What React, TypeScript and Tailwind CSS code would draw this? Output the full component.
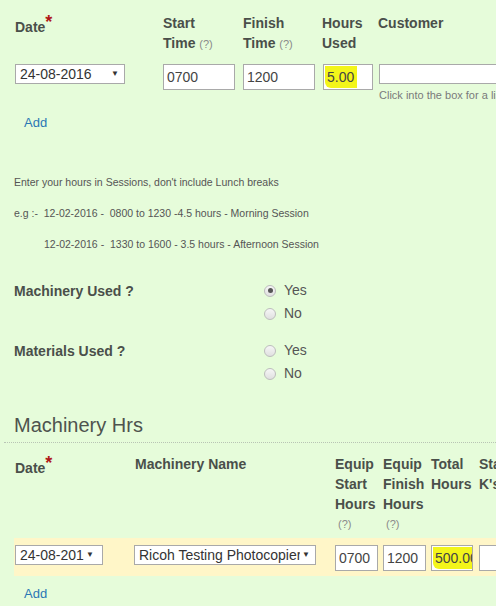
import React from "react";

const label = "text-[14px] font-bold leading-5 text-[#4a4f4a]";
const hint = "text-[11px] font-normal text-[#8a8a8a]";

function Select({ value, className, textW }: { value: string; className: string; textW?: string }) {
  return (
    <div
      className={`flex h-[20px] items-center overflow-hidden border border-[#a9a9a9] bg-white pl-[4px] pr-[5px] text-[14px] text-[#333] ${className}`}
    >
      <span className={`min-w-0 flex-1 overflow-hidden whitespace-nowrap ${textW ?? ""}`}>{value}</span>
      <span className="ml-[2px] shrink-0 text-[8px] text-[#333]">▼</span>
    </div>
  );
}

function Box({ value, className, mark }: { value?: string; className: string; mark?: boolean }) {
  return (
    <div
      className={`flex items-center overflow-hidden border border-[#a9a9a9] bg-white pl-[3px] text-[14px] text-[#444] ${className}`}
    >
      {mark ? (
        <span className="-ml-[2px] rounded-bl-[6px] bg-[#f3f51a] pl-[2px] pr-[3px] leading-[22px] whitespace-nowrap">{value}</span>
      ) : (
        <span className="whitespace-nowrap">{value}</span>
      )}
    </div>
  );
}

function Radio({ checked, text }: { checked?: boolean; text: string }) {
  return (
    <div className="flex h-[23px] items-center gap-[8px]">
      <span className="flex h-[12px] w-[12px] items-center justify-center rounded-full border border-[#bdbdbd] bg-gradient-to-b from-[#f6f6f6] to-[#e0e0e0]">
        {checked && <span className="h-[5px] w-[5px] rounded-full bg-[#555]" />}
      </span>
      <span className="text-[14px] text-[#555]">{text}</span>
    </div>
  );
}

export default function App() {
  return (
    <div
      className="relative h-[606px] w-[496px] overflow-hidden bg-[#e6fcda] text-[#4a4f4a]"
      style={{ fontFamily: '"Liberation Sans", Arial, sans-serif' }}
    >
      {/* hours table */}
      <div className="flex pl-[15px] pt-[13px]">
        <div className="w-[148px] shrink-0">
          <div className={`${label} pt-[3px]`}>
            Date<span className="relative -top-[4px] text-[18px] text-[#b01818]">*</span>
          </div>
        </div>
        <div className="w-[80px] shrink-0">
          <div className={label}>Start</div>
          <div className={label}>
            Time <span className={hint}>(?)</span>
          </div>
        </div>
        <div className="w-[79px] shrink-0">
          <div className={label}>Finish</div>
          <div className={label}>
            Time <span className={hint}>(?)</span>
          </div>
        </div>
        <div className="w-[56px] shrink-0">
          <div className={label}>Hours</div>
          <div className={label}>Used</div>
        </div>
        <div className="shrink-0">
          <div className={label}>Customer</div>
        </div>
      </div>

      <div className="mt-[10px] flex pl-[15px]">
        <div className="w-[148px] shrink-0">
          <Select value="24-08-2016" className="w-[110px]" />
        </div>
        <div className="w-[80px] shrink-0">
          <Box value="0700" className="h-[26px] w-[72px]" />
        </div>
        <div className="w-[80px] shrink-0">
          <Box value="1200" className="h-[26px] w-[72px]" />
        </div>
        <div className="w-[56px] shrink-0">
          <Box value="5.00" className="h-[26px] w-[50px]" mark />
        </div>
        <div className="shrink-0">
          <Box className="h-[20px] w-[140px]" />
          <div className="mt-[3px] whitespace-nowrap text-[11px] text-[#7a7a7a]">Click into the box for a list</div>
        </div>
      </div>

      <div className="mt-[9px] pl-[24px] text-[13px] text-[#2a76b5]">Add</div>

      {/* instructions */}
      <div className="mt-[35px] pl-[14px] text-[10.5px] leading-[31px] text-[#555]">
        <div>Enter your hours in Sessions, don't include Lunch breaks</div>
        <div className="whitespace-pre">e.g :-  12-02-2016 -  0800 to 1230 -4.5 hours - Morning Session</div>
        <div className="whitespace-pre pl-[30px]">12-02-2016 -  1330 to 1600 - 3.5 hours - Afternoon Session</div>
      </div>

      {/* radios */}
      <div className="mt-[19px] flex pl-[14px]">
        <div className="w-[250px] shrink-0 pt-[2px] text-[14px] font-bold">Machinery Used ?</div>
        <div>
          <Radio checked text="Yes" />
          <Radio text="No" />
        </div>
      </div>
      <div className="mt-[14px] flex pl-[14px]">
        <div className="w-[250px] shrink-0 pt-[2px] text-[14px] font-bold">Materials Used ?</div>
        <div>
          <Radio text="Yes" />
          <Radio text="No" />
        </div>
      </div>

      {/* machinery hrs */}
      <div className="mt-[25px] ml-[4px] border-b border-dotted border-[#b9c4b5] pb-[2px] pl-[10px] text-[20px] text-[#4e534e]">
        Machinery Hrs
      </div>

      <div className="mt-[11px] flex pl-[15px]">
        <div className="w-[119px] shrink-0">
          <div className={`${label} pt-[3px]`}>
            Date<span className="relative -top-[4px] text-[18px] text-[#b01818]">*</span>
          </div>
        </div>
        <div className="w-[201px] shrink-0">
          <div className={`${label} pl-[1px]`}>Machinery Name</div>
        </div>
        <div className="w-[48px] shrink-0">
          <div className={label}>Equip</div>
          <div className={label}>Start</div>
          <div className={label}>Hours</div>
          <div className={`${hint} pl-[3px] leading-5`}>(?)</div>
        </div>
        <div className="w-[48px] shrink-0">
          <div className={label}>Equip</div>
          <div className={label}>Finish</div>
          <div className={label}>Hours</div>
          <div className={`${hint} pl-[3px] leading-5`}>(?)</div>
        </div>
        <div className="w-[48px] shrink-0">
          <div className={label}>Total</div>
          <div className={label}>Hours</div>
        </div>
        <div className="shrink-0 whitespace-nowrap">
          <div className={label}>Start</div>
          <div className={label}>K's</div>
        </div>
      </div>

      <div className="ml-[14px] mt-[4px] flex h-[38px] items-start bg-[#fff6c8] pl-[1px] pt-[7px]">
        <div className="w-[119px] shrink-0">
          <Select value="24-08-2016" className="w-[88px] pr-[4px]" textW="max-w-[64px]" />
        </div>
        <div className="w-[201px] shrink-0">
          <Select value="Ricoh Testing Photocopier" className="w-[182px]" />
        </div>
        <div className="w-[48px] shrink-0">
          <Box value="0700" className="h-[26px] w-[43px]" />
        </div>
        <div className="w-[48px] shrink-0">
          <Box value="1200" className="h-[26px] w-[43px]" />
        </div>
        <div className="w-[48px] shrink-0">
          <Box value="500.00" className="h-[26px] w-[42px]" mark />
        </div>
        <div className="shrink-0">
          <Box className="h-[26px] w-[40px]" />
        </div>
      </div>

      <div className="mt-[8px] pl-[24px] text-[13px] text-[#2a76b5]">Add</div>
    </div>
  );
}
